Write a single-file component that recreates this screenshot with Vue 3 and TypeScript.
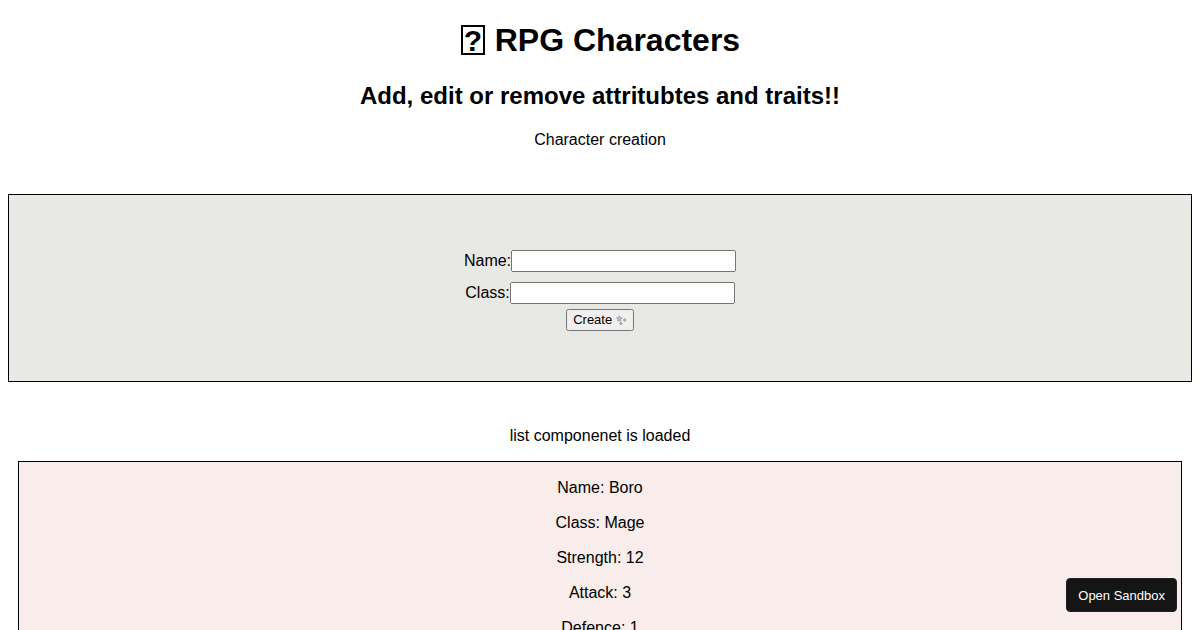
<script setup lang="ts">
import { ref } from 'vue'

interface Character {
  name: string
  role: string
  strength: number
  attack: number
  defence: number
}

const name = ref('')
const role = ref('')
const characters = ref<Character[]>([
  { name: 'Boro', role: 'Mage', strength: 12, attack: 3, defence: 1 },
])

function create() {
  if (!name.value || !role.value) return
  characters.value.push({ name: name.value, role: role.value, strength: 1, attack: 1, defence: 1 })
  name.value = ''
  role.value = ''
}
</script>

<template>
  <main class="page">
    <h1><span class="emblem">?</span> RPG Characters</h1>
    <h2>Add, edit or remove attritubtes and traits!!</h2>
    <p>Character creation</p>
    <form class="creator" @submit.prevent="create">
      <div class="field"><label for="name">Name:</label><input id="name" v-model="name" type="text" /></div>
      <div class="field"><label for="class">Class:</label><input id="class" v-model="role" type="text" /></div>
      <button class="create" type="submit">
        Create
        <svg class="sparkles" viewBox="0 0 11 11" aria-hidden="true">
          <path d="M3.5 .8 4.3 2.7 6.3 3.2 4.6 4.3 4.9 6.3 3.4 5.2 1.7 6.2 2.1 4.2 .6 3 2.7 2.7Z" />
          <path d="M8.7 3.5 9.2 4.5 10.3 5 9.2 5.5 8.7 6.5 8.2 5.5 7.1 5 8.2 4.5Z" />
          <path d="M4.8 7 5.3 8 6.4 8.5 5.3 9 4.8 10 4.3 9 3.2 8.5 4.3 8Z" />
        </svg>
      </button>
    </form>
    <p>list componenet is loaded</p>
    <section v-for="(c, i) in characters" :key="i" class="card">
      <p>Name: {{ c.name }}</p>
      <p>Class: {{ c.role }}</p>
      <p>Strength: {{ c.strength }}</p>
      <p>Attack: {{ c.attack }}</p>
      <p>Defence: {{ c.defence }}</p>
    </section>
    <button class="sandbox" type="button">Open Sandbox</button>
  </main>
</template>

<style>
html {
  scrollbar-width: none;
}
body {
  margin: 0;
  background: #fff;
}
</style>

<style scoped>
.page {
  padding: 0 8px;
  display: flow-root;
  font-family: 'Nimbus Sans', 'Liberation Sans', Arial, sans-serif;
  font-size: 16px;
  line-height: 19px;
  color: #000;
  text-align: center;
}
h1 {
  margin: 21px 0;
  font-size: 32px;
  line-height: 39px;
}
h2 {
  margin: 20px 0;
  font-size: 24px;
  line-height: 29px;
}
p {
  margin: 16px 0;
}
.emblem {
  display: inline-block;
  box-sizing: border-box;
  width: 24px;
  height: 30px;
  margin: 0 1px;
  border: 2px solid #000;
  font-size: 30px;
  line-height: 27px;
  text-align: center;
}
.creator {
  margin: 45px 0 44px;
  padding: 50px;
  border: 1px solid #000;
  background: #e8e8e4;
}
.field {
  height: 32px;
}
.field input {
  width: 225px;
  height: 22px;
  margin: 5px 0;
  box-sizing: border-box;
}
.create {
  display: block;
  box-sizing: border-box;
  height: 22px;
  margin: 0 auto;
  padding: 0 5px;
  font-family: inherit;
  font-size: 13px;
  line-height: 18px;
}
.sparkles {
  width: 11px;
  height: 11px;
  vertical-align: -2px;
  fill: #c9ccc8;
  stroke: #858b8c;
  stroke-width: 0.7;
}
.card {
  margin: 0 10px;
  border: 1px solid #000;
  background: #f8edeb;
}
.sandbox {
  position: fixed;
  right: 23px;
  bottom: 18px;
  height: 34px;
  padding: 0 11px;
  border: 1px solid #222;
  border-radius: 4px;
  background: #151515;
  color: #fff;
  font-family: inherit;
  font-size: 13px;
}
</style>
